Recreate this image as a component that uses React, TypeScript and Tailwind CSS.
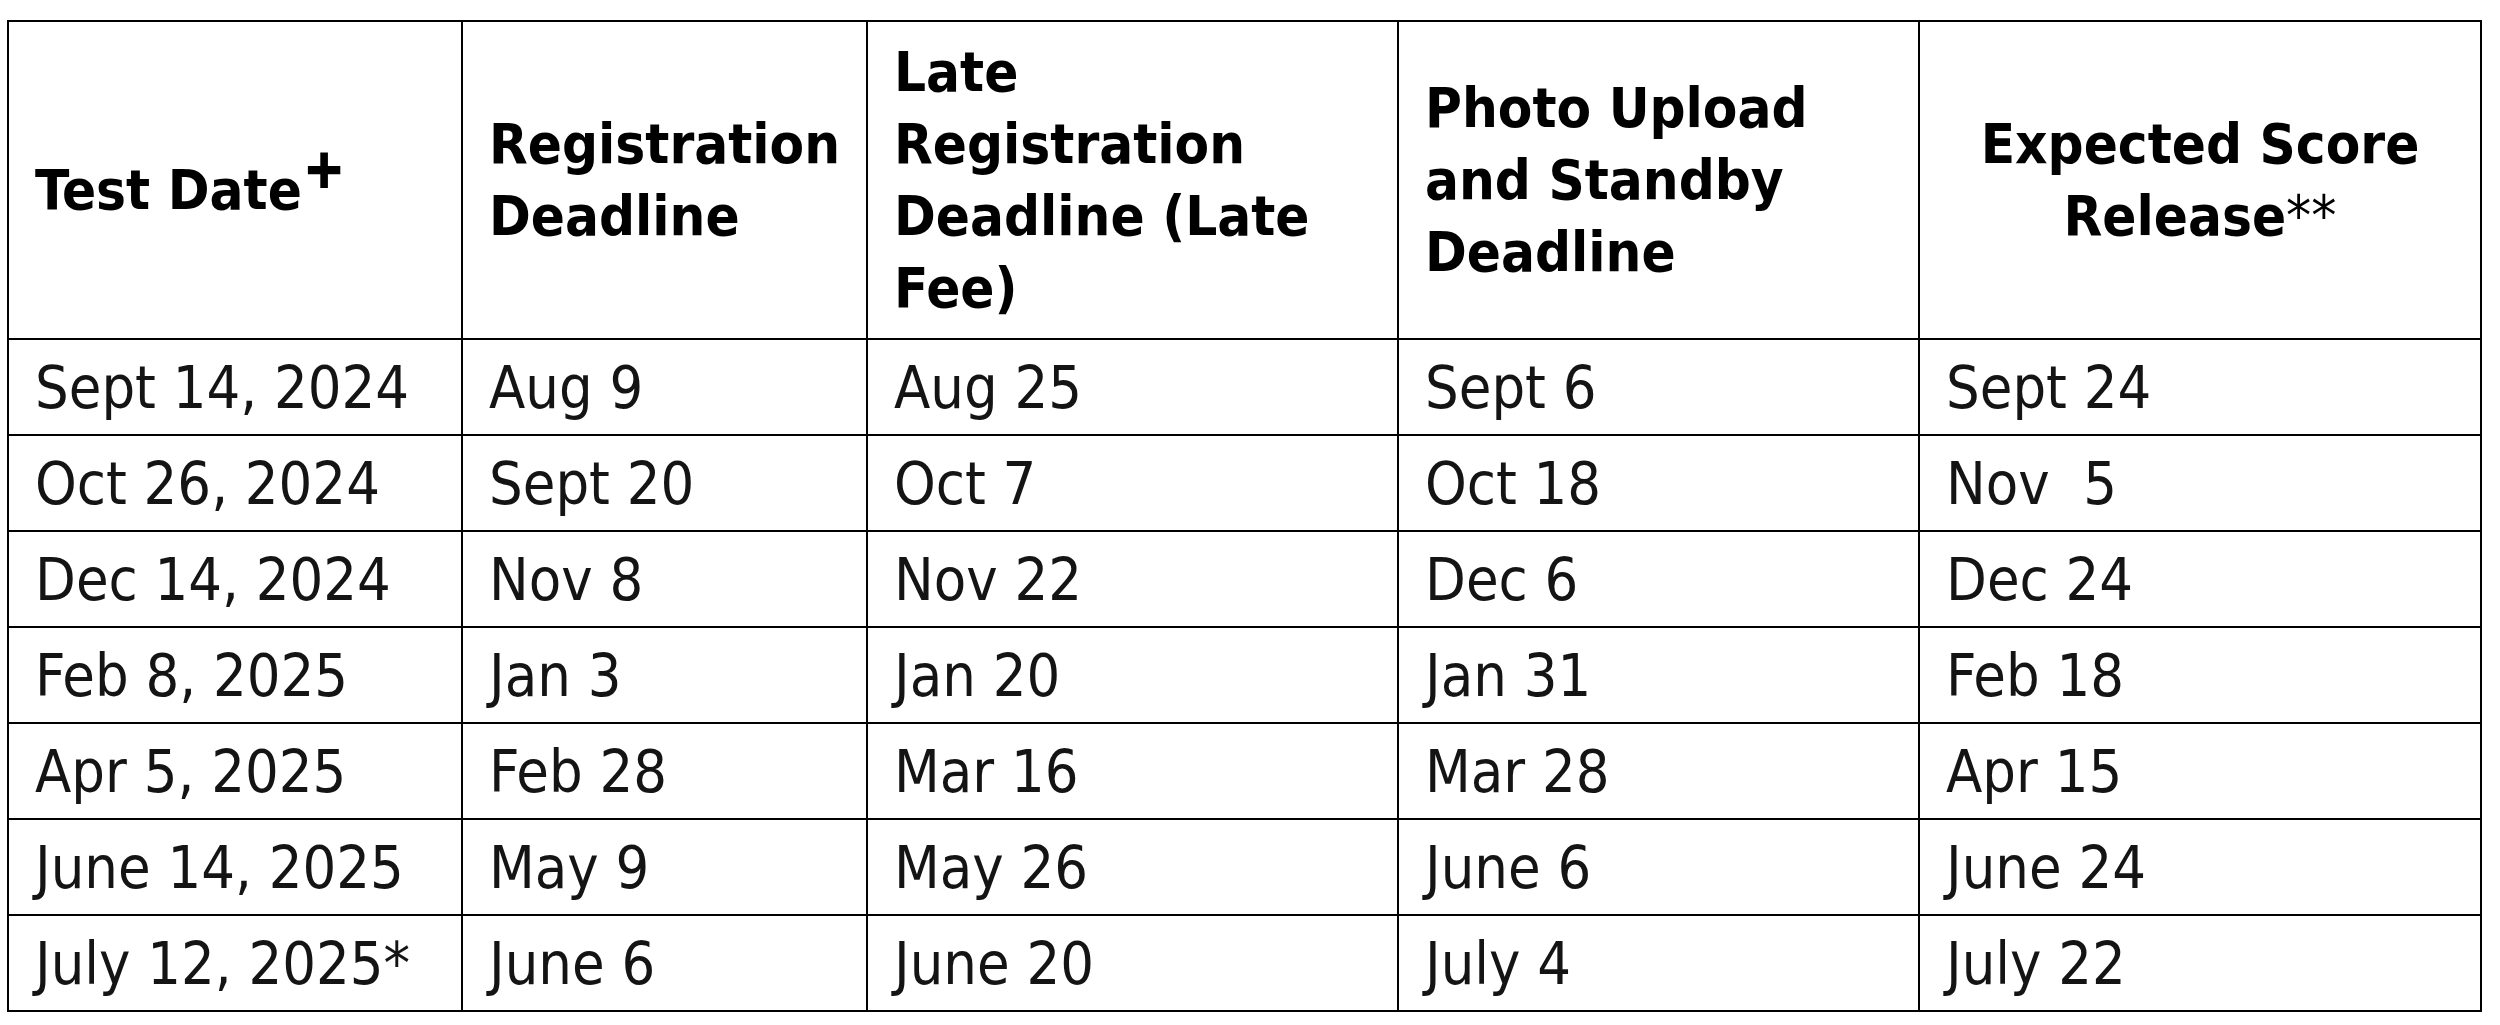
const rows: string[][] = [
  ["Sept 14, 2024", "Aug 9", "Aug 25", "Sept 6", "Sept 24"],
  ["Oct 26, 2024", "Sept 20", "Oct 7", "Oct 18", "Nov  5"],
  ["Dec 14, 2024", "Nov 8", "Nov 22", "Dec 6", "Dec 24"],
  ["Feb 8, 2025", "Jan 3", "Jan 20", "Jan 31", "Feb 18"],
  ["Apr 5, 2025", "Feb 28", "Mar 16", "Mar 28", "Apr 15"],
  ["June 14, 2025", "May 9", "May 26", "June 6", "June 24"],
  ["July 12, 2025*", "June 6", "June 20", "July 4", "July 22"],
];

const App = () => {
  return (
    <div className="w-[2500px] h-[1025px] bg-white pt-[20px] pl-[7px] font-['DejaVu_Sans_Condensed','DejaVu_Sans',sans-serif] [font-stretch:condensed] text-[#141414]">
      <table className="table-fixed border-collapse w-[2473px]">
        <colgroup>
          <col className="w-[454px]" />
          <col className="w-[405px]" />
          <col className="w-[531px]" />
          <col className="w-[521px]" />
          <col className="w-[562px]" />
        </colgroup>
        <thead>
          <tr className="h-[318px] text-[56px] leading-[72px] font-bold text-black">
            <th className="border-2 border-black px-[26px] text-left align-middle font-bold">
              <span className="relative top-[10px]">
                Test Date
                <sup className="text-[54px] leading-none font-bold relative -top-[22px] ml-[2px] [-webkit-text-stroke:2px_black]">+</sup>
              </span>
            </th>
            <th className="border-2 border-black px-[26px] text-left align-middle font-bold">
              Registration Deadline
            </th>
            <th className="border-2 border-black px-[26px] text-left align-middle font-bold">
              Late Registration Deadline (Late Fee)
            </th>
            <th className="border-2 border-black px-[26px] text-left align-middle font-bold">
              Photo Upload and Standby Deadline
            </th>
            <th className="border-2 border-black px-[26px] text-center align-middle font-bold">
              Expected Score Release<span className="font-normal">**</span>
            </th>
          </tr>
        </thead>
        <tbody>
          {rows.map((row, i) => (
            <tr key={i} className="h-[96px] text-[59px] leading-none">
              {row.map((cell, j) => (
                <td key={j} className="border-2 border-black px-[26px] align-middle whitespace-pre">
                  {cell}
                </td>
              ))}
            </tr>
          ))}
        </tbody>
      </table>
    </div>
  );
};

export default App;
